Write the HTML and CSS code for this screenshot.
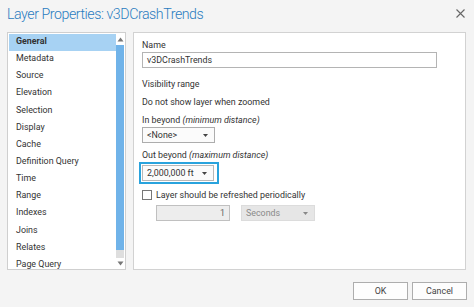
FILE: index.html
```html
<!DOCTYPE html>
<html>
<head>
<meta charset="utf-8">
<link rel="stylesheet" href="styles.css">
</head>
<body>
<div class="dialog">
  <div class="header">
    <div class="title">Layer Properties: v3DCrashTrends</div>
    <div class="close">
      <svg width="9" height="9" viewBox="0 0 9 9"><path d="M0.5 0.5 L8.5 8.5 M8.5 0.5 L0.5 8.5" stroke="#666" stroke-width="1.1" fill="none"/></svg>
    </div>
  </div>
  <div class="main">
    <div class="nav">
      <ul class="nav-list">
        <li class="nav-item selected">General</li>
        <li class="nav-item">Metadata</li>
        <li class="nav-item">Source</li>
        <li class="nav-item">Elevation</li>
        <li class="nav-item">Selection</li>
        <li class="nav-item">Display</li>
        <li class="nav-item">Cache</li>
        <li class="nav-item">Definition Query</li>
        <li class="nav-item">Time</li>
        <li class="nav-item">Range</li>
        <li class="nav-item">Indexes</li>
        <li class="nav-item">Joins</li>
        <li class="nav-item">Relates</li>
        <li class="nav-item">Page Query</li>
      </ul>
      <div class="scrollbar">
        <div class="arrow">
          <svg width="7" height="5" viewBox="0 0 7 5"><path d="M3.5 0.5 L6.5 4.5 L0.5 4.5 Z" fill="#777"/></svg>
        </div>
        <div class="thumb"></div>
        <div class="track"></div>
        <div class="arrow">
          <svg width="7" height="5" viewBox="0 0 7 5"><path d="M0.5 0.5 L6.5 0.5 L3.5 4.5 Z" fill="#777"/></svg>
        </div>
      </div>
    </div>
    <div class="content">
      <div class="label">Name</div>
      <div class="textbox">v3DCrashTrends</div>
      <div class="label section">Visibility range</div>
      <div class="label row">Do not show layer when zoomed</div>
      <div class="label row">In beyond <i>(minimum distance)</i></div>
      <div class="select">
        <span>&lt;None&gt;</span>
        <svg width="5" height="3" viewBox="0 0 5 3"><path d="M0 0 L5 0 L2.5 3 Z" fill="#444"/></svg>
      </div>
      <div class="label row2">Out beyond <i>(maximum distance)</i></div>
      <div class="focus">
        <div class="select inner">
          <span>2,000,000 ft</span>
          <svg width="5" height="3" viewBox="0 0 5 3"><path d="M0 0 L5 0 L2.5 3 Z" fill="#444"/></svg>
        </div>
      </div>
      <div class="check-row">
        <div class="checkbox"></div>
        <div class="label">Layer should be refreshed periodically</div>
      </div>
      <div class="refresh-row">
        <div class="number">1</div>
        <div class="select disabled">
          <span>Seconds</span>
          <svg width="5" height="3" viewBox="0 0 5 3"><path d="M0 0 L5 0 L2.5 3 Z" fill="#888"/></svg>
        </div>
      </div>
    </div>
  </div>
  <div class="footer">
    <div class="button">OK</div>
    <div class="button">Cancel</div>
  </div>
</div>
</body>
</html>
```

FILE: styles.css
```css
html, body {
  margin: 0;
  padding: 0;
}
body {
  background: #f4f4f4;
  font-family: "Roboto", "Open Sans", sans-serif;
  color: #333;
  width: 474px;
  height: 307px;
  overflow: hidden;
}
.dialog {
  display: flex;
  flex-direction: column;
  height: 307px;
}
.header {
  height: 32px;
  display: flex;
  align-items: flex-start;
  justify-content: space-between;
  padding: 0 9px 0 7px;
}
.title {
  font-size: 14.2px;
  font-weight: 300;
  letter-spacing: -0.45px;
  color: #2a7cc0;
  line-height: 20px;
  margin-top: 4px;
}
.close {
  margin-top: 9px;
  width: 9px;
  height: 9px;
  display: flex;
}
.main {
  display: flex;
  gap: 7px;
  padding-left: 7px;
  height: 238px;
}
.nav {
  background: #fff;
  border: 1px solid #cfcfcf;
  display: flex;
  padding: 1px 0 1px 1px;
  box-sizing: border-box;
  width: 119px;
  height: 238px;
}
.nav-list {
  list-style: none;
  margin: 0;
  padding: 0;
  flex: 1;
  font-size: 8.9px;
}
.nav-item {
  height: 17.15px;
  line-height: 14px;
  padding-left: 7px;
  white-space: nowrap;
}
.nav-item.selected {
  background: #a7d2f3;
  font-weight: 700;
  color: #333;
  line-height: 15px;
}
.scrollbar {
  width: 8px;
  margin-right: 1px;
  display: flex;
  flex-direction: column;
}
.arrow {
  height: 6px;
  display: flex;
  align-items: center;
  justify-content: center;
  padding: 2px 0;
}
.thumb {
  height: 205px;
  background: #70b3e9;
  margin-top: 1px;
}
.track {
  flex: 1;
  background: #dedede;
}
.content {
  width: 333px;
  height: 238px;
  box-sizing: border-box;
  background: #fff;
  border: 1px solid #d2d2d2;
  padding: 5px 0 0 8px;
  font-size: 8.9px;
}
.label {
  line-height: 14px;
  white-space: nowrap;
}
.label i {
  font-style: italic;
}
.textbox {
  width: 295px;
  height: 16px;
  box-sizing: border-box;
  border: 1px solid #b4b4b4;
  padding-left: 4px;
  line-height: 14px;
}
.section {
  margin-top: 9px;
}
.row {
  margin-top: 4px;
}
.row2 {
  margin-top: 5px;
}
.select {
  width: 73px;
  height: 16px;
  box-sizing: border-box;
  border: 1px solid #adadad;
  background: #fbfbfb;
  display: flex;
  align-items: center;
  justify-content: space-between;
  padding: 0 6px 0 4px;
  line-height: 14px;
}
.focus {
  width: 74px;
  border: 2px solid #29a3dd;
  padding: 1px;
  margin-left: -3px;
}
.select.inner {
  width: 72px;
  border-color: #b8b8b8;
}
.check-row {
  display: flex;
  align-items: center;
  gap: 4px;
  margin-top: 4px;
}
.checkbox {
  width: 10px;
  height: 10px;
  box-sizing: border-box;
  border: 1px solid #777;
  background: #fff;
}
.refresh-row {
  display: flex;
  gap: 11px;
  margin-top: 3px;
  padding-left: 14px;
}
.number {
  width: 74px;
  height: 16px;
  box-sizing: border-box;
  border: 1px solid #c0c0c0;
  background: #ededed;
  text-align: right;
  padding-right: 4px;
  line-height: 14px;
  color: #666;
}
.select.disabled {
  width: 74px;
  border-color: #dcdcdc;
  background: #e6e6e6;
  color: #8a8a8a;
}
.footer {
  display: flex;
  justify-content: flex-end;
  gap: 4px;
  padding: 12px 7px 0 0;
}
.button {
  width: 55px;
  height: 18px;
  box-sizing: border-box;
  border: 1px solid #adadad;
  background: #fdfdfd;
  font-size: 8.9px;
  line-height: 16px;
  text-align: center;
  color: #444;
}
```
